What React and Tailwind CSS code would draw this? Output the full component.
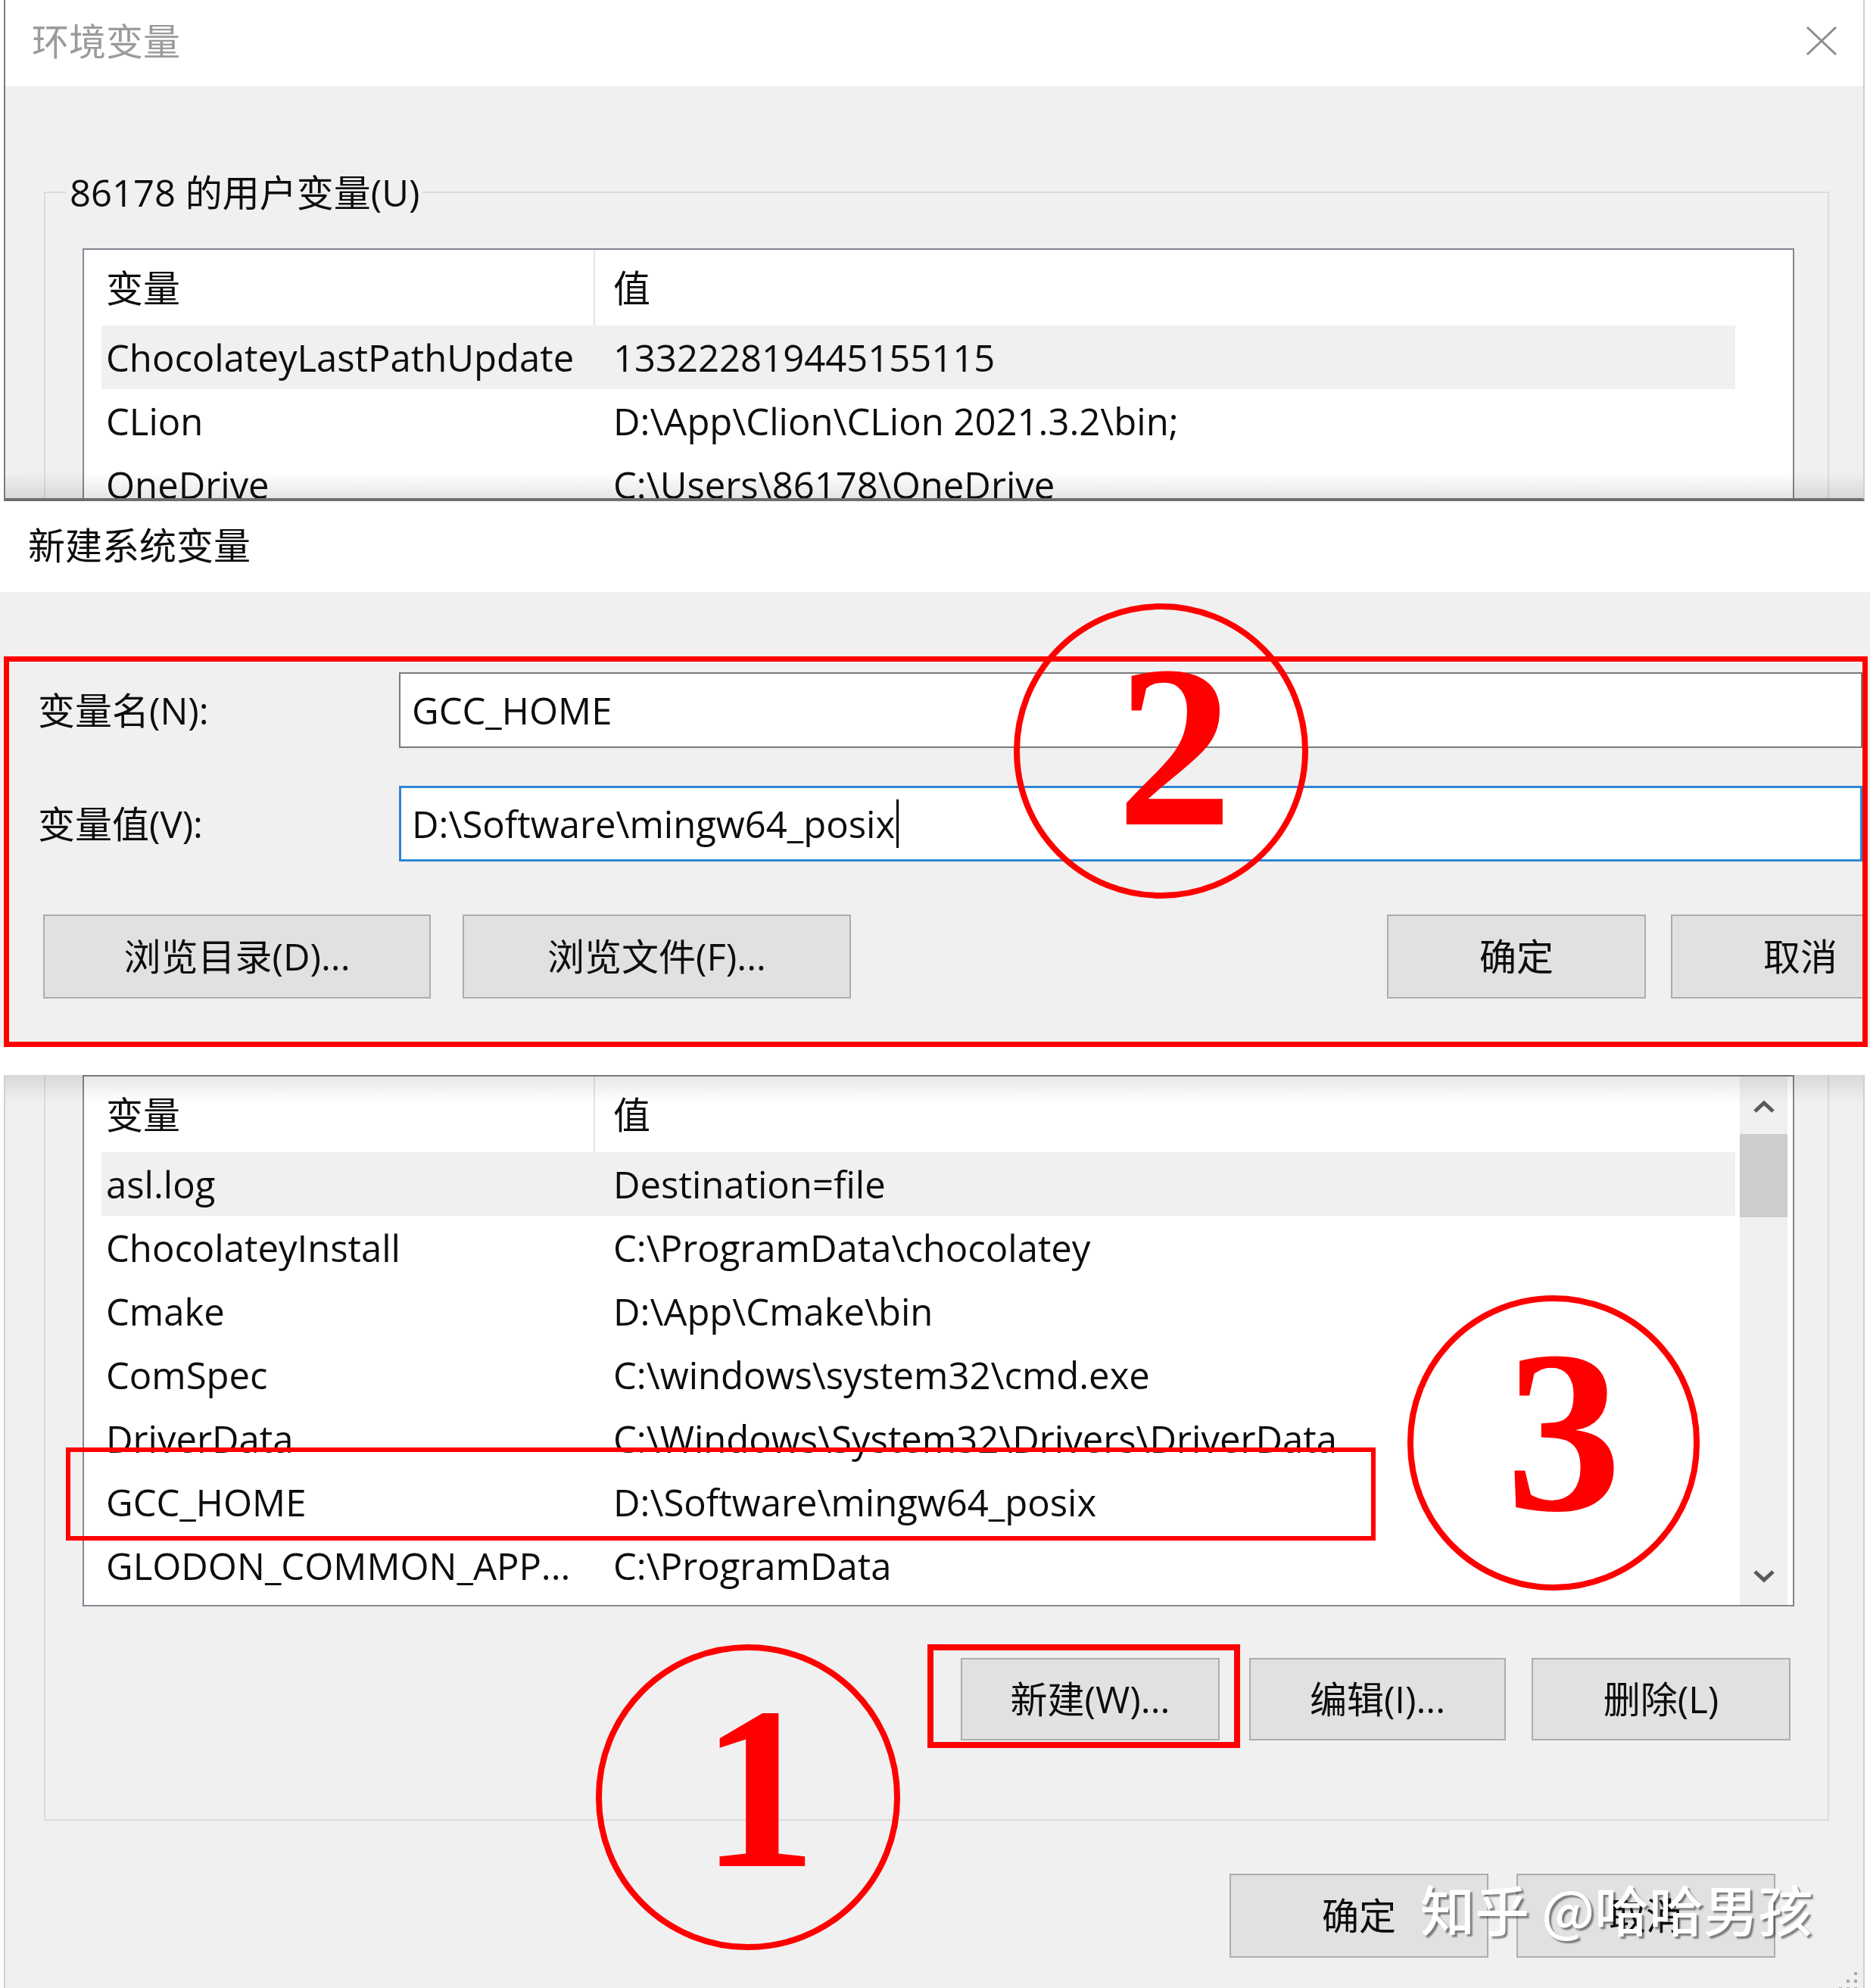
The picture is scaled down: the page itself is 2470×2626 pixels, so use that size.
import React from "react";

const userRows = [
  ["ChocolateyLastPathUpdate", "133222819445155115"],
  ["CLion", "D:\\App\\Clion\\CLion 2021.3.2\\bin;"],
  ["OneDrive", "C:\\Users\\86178\\OneDrive"],
];

const sysRows = [
  ["asl.log", "Destination=file"],
  ["ChocolateyInstall", "C:\\ProgramData\\chocolatey"],
  ["Cmake", "D:\\App\\Cmake\\bin"],
  ["ComSpec", "C:\\windows\\system32\\cmd.exe"],
  ["DriverData", "C:\\Windows\\System32\\Drivers\\DriverData"],
  ["GCC_HOME", "D:\\Software\\mingw64_posix"],
  ["GLODON_COMMON_APP...", "C:\\ProgramData"],
];

function Chevron({ up }) {
  return (
    <svg width="32" height="20" viewBox="0 0 32 20">
      <polyline
        points={up ? "4,16 16,5 28,16" : "4,4 16,15 28,4"}
        fill="none"
        stroke="#5a5a5a"
        strokeWidth="5"
      />
    </svg>
  );
}

function VarList({ rows, scroll, className }) {
  return (
    <div className={`flex border-2 border-[#828790] bg-white ${className}`}>
      <div className="w-[2181px] shrink-0">
        {/* header */}
        <div className="flex h-[100px]">
          <div className="flex w-[673px] shrink-0 items-center pl-[29px]">变量</div>
          <div className="flex items-center border-l-2 border-[#e5e5e5] pl-[24px]">值</div>
        </div>
        {rows.map(([name, value], i) => (
          <div
            key={name}
            className={`ml-[23px] flex h-[84px] items-center whitespace-nowrap ${i === 0 ? "bg-[#f0f0f0]" : ""}`}
          >
            <div className="w-[676px] shrink-0 pl-[6px]">{name}</div>
            <div>{value}</div>
          </div>
        ))}
      </div>

      {scroll && (
        <div className="ml-[6px] flex w-[63px] flex-col bg-[#f0f0f0] pt-[4px]">
          <div className="flex h-[72px] items-center justify-center">
            <Chevron up />
          </div>
          <div className="h-[110px] bg-[#cdcdcd]" />
          <div className="flex-1" />
          <div className="flex h-[76px] items-center justify-center">
            <Chevron />
          </div>
        </div>
      )}
    </div>
  );
}

function Btn({ children, className }) {
  return (
    <div
      className={`flex shrink-0 items-center justify-center border-2 border-[#adadad] bg-[#e1e1e1] ${className}`}
    >
      {children}
    </div>
  );
}

function Circle({ n, className, digitClass }) {
  return (
    <div className={`absolute rounded-full border-[8px] border-[#fe0000] ${className}`}>
      <span
        className={`absolute font-['Liberation_Serif','Times_New_Roman',serif] text-[306px] font-bold leading-none text-[#fe0000] ${digitClass}`}
      >
        {n}
      </span>
    </div>
  );
}

export default function App() {
  return (
    <div className="relative h-[2626px] w-[2470px] overflow-hidden bg-white font-['Open_Sans','Noto_Sans_CJK_SC',sans-serif] text-[49px] leading-none text-[#0d0d0d]">

      {/* ENV DIALOG (top part) */}
      <div className="relative ml-[5px] flex h-[662px] w-[2458px] flex-col overflow-hidden border-b-4 border-l-2 border-r-2 border-b-[#6e6e6e] border-l-[#7c7c7c] border-r-[#d0d0d0] bg-[#f0f0f0]">
        <div className="flex h-[114px] shrink-0 items-center justify-between bg-white pb-[6px] pl-[35px] pr-[34px]">
          <span className="text-[#9b9b9b]">环境变量</span>
          <svg width="42" height="40" viewBox="0 0 42 40">
            <line x1="2" y1="2" x2="40" y2="38" stroke="#8c8c8c" strokeWidth="3" />
            <line x1="40" y1="2" x2="2" y2="38" stroke="#8c8c8c" strokeWidth="3" />
          </svg>
        </div>

        <fieldset className="ml-[51px] mt-[111px] w-[2358px] shrink-0 border-2 border-[#dcdcdc]">
          <legend className="ml-[28px] px-[4px] leading-[58px]">86178 的用户变量(U)</legend>
          <VarList rows={userRows} className="ml-[49px] mt-[45px] w-[2261px] h-[500px]" />
        </fieldset>

        <div className="absolute bottom-0 left-0 right-0 h-[34px] bg-linear-to-b from-transparent to-black/10" />
      </div>

      {/* NEW SYSTEM VARIABLE DIALOG */}
      <div className="flex h-[120px] items-center bg-white pb-[4px] pl-[37px]">新建系统变量</div>
      <div className="bg-[#f0f0f0] pl-[5px] pt-[85px]">
        <div className="h-[516px] w-[2462px] overflow-hidden border-[7px] border-[#fe0000]">
          <div className="mt-[14px] flex h-[100px] items-center">
            <div className="w-[515px] shrink-0 pl-[38px]">变量名(N):</div>
            <div className="flex h-full flex-1 items-center border-2 border-[#7a7a7a] bg-white pl-[15px]">
              GCC_HOME
            </div>
          </div>
          <div className="mt-[50px] flex h-[100px] items-center">
            <div className="w-[515px] shrink-0 pl-[38px]">变量值(V):</div>
            <div className="flex h-full flex-1 items-center border-[3px] border-[#2f86d6] bg-white pl-[14px]">
              D:\Software\mingw64_posix
              <span className="ml-[2px] h-[64px] w-[3px] bg-black" />
            </div>
          </div>
          <div className="mt-[70px] flex h-[111px]">
            <Btn className="ml-[45px] w-[512px]">浏览目录(D)...</Btn>
            <Btn className="ml-[42px] w-[513px]">浏览文件(F)...</Btn>
            <Btn className="ml-[708px] w-[342px]">确定</Btn>
            <Btn className="ml-[33px] w-[342px]">取消</Btn>
          </div>
        </div>
      </div>

      {/* ENV DIALOG (bottom part) */}
      <div className="relative ml-[5px] h-[1221px] w-[2458px] border-b-2 border-l-2 border-r-2 border-b-[#a0a0a0] border-l-[#d0d0d0] border-r-[#d0d0d0] bg-[#f0f0f0]">
        <div className="ml-[51px] h-[985px] w-[2358px] border-b-2 border-l-2 border-r-2 border-[#dcdcdc]">
          <VarList rows={sysRows} scroll className="ml-[49px] mt-[37px] h-[702px] w-[2261px]" />
          <div className="mt-[68px] flex h-[109px]">
            <Btn className="ml-[1209px] w-[342px]">新建(W)...</Btn>
            <Btn className="ml-[39px] w-[339px]">编辑(I)...</Btn>
            <Btn className="ml-[34px] w-[342px]">删除(L)</Btn>
          </div>
        </div>
        <div className="mt-[70px] flex h-[111px]">
          <Btn className="ml-[1617px] w-[342px]">确定</Btn>
          <Btn className="ml-[37px] w-[342px]">取消</Btn>
        </div>

        {/* shadow under the new dialog */}
        <div className="absolute left-0 right-0 top-0 h-[36px] bg-linear-to-b from-black/10 to-transparent" />

        {/* resize grip */}
        <svg className="absolute bottom-[8px] right-[6px]" width="30" height="30" viewBox="0 0 30 30">
          {[[24, 4], [24, 14], [14, 14], [24, 24], [14, 24], [4, 24]].map(([x, y]) => (
            <rect key={`${x}-${y}`} x={x} y={y} width="4" height="4" fill="#a8a8a8" />
          ))}
        </svg>
      </div>

      {/* desktop strip under the window */}
      <div className="h-[8px] bg-white" />
      <div className="flex h-[14px]">
        <div className="w-[866px] bg-[#d9d9d9]" />
        <div className="w-[140px] bg-[#3b3b6e]" />
        <div className="w-[330px] bg-[#c9b3d6]" />
        <div className="w-[60px] bg-[#d98a78]" />
        <div className="w-[200px] bg-[#1a1414]" />
        <div className="w-[300px] bg-[#c9a9a4]" />
        <div className="w-[20px] bg-[#d98a78]" />
        <div className="w-[310px] bg-[#1a1414]" />
        <div className="flex-1 bg-[#cf7a68]" />
      </div>

      {/* ANNOTATIONS */}
      <div className="absolute left-[87px] top-[1912px] h-[123px] w-[1730px] border-[6px] border-[#fe0000]" />
      <div className="absolute left-[1225px] top-[2172px] h-[137px] w-[413px] border-[8px] border-[#fe0000]" />

      <Circle n="2" className="left-[1339px] top-[797px] h-[390px] w-[389px]" digitClass="left-[128px] top-[28px]" />
      <Circle n="3" className="left-[1859px] top-[1711px] h-[390px] w-[386px]" digitClass="left-[122px] top-[19px]" />
      <Circle n="1" className="left-[787px] top-[2172px] h-[404px] w-[402px]" digitClass="left-[131px] top-[29px]" />

      <div className="absolute left-[1876px] top-[2484px] font-['Noto_Sans_CJK_SC',sans-serif] text-[72px] font-medium leading-none text-white [text-shadow:3px_3px_2px_rgba(0,0,0,0.45)]">
        知乎 @哈哈男孩
      </div>
    </div>
  );
}
